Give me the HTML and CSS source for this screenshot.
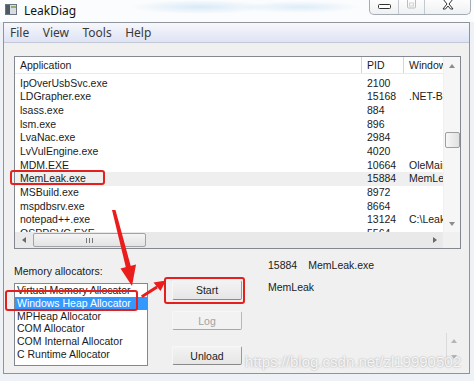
FILE: index.html
```html
<!DOCTYPE html>
<html lang="en">
<head>
    <meta charset="UTF-8">
    <meta name="viewport" content="width=device-width, initial-scale=1.0">
    <title>LeakDiag</title>
    <link rel="stylesheet" href="styles.css">
</head>
<body>
<div class="window">
    <!-- title bar -->
    <div class="titlebar">
        <svg class="app-icon" width="12" height="11" viewBox="0 0 12 11">
            <rect x="0.5" y="0.5" width="11" height="10" fill="#d9dde2" stroke="#6d7680"/>
            <rect x="1" y="1" width="4" height="9" fill="#4c5a66"/>
            <rect x="6" y="2" width="5" height="2" fill="#8fb36a"/>
        </svg>
        <span class="title">LeakDiag</span>
        <div class="controls">
            <div class="ctl ctl-min">
                <svg width="13" height="6" viewBox="0 0 13 6"><rect x="0.5" y="0.5" width="12" height="4" rx="1" fill="#fff" stroke="#333"/></svg>
            </div>
            <div class="ctl ctl-max">
                <svg width="9" height="9" viewBox="0 0 9 9"><rect x="0.5" y="-2" width="8" height="10" rx="1" fill="none" stroke="#b9bec4"/><rect x="2.5" y="3" width="4" height="3" fill="none" stroke="#d0d4d8"/></svg>
            </div>
            <div class="ctl ctl-close">
                <svg width="12" height="10" viewBox="0 0 12 10"><path d="M1 -1 L5 4 L1 9 L3.5 9 L6 6 L8.5 9 L11 9 L7 4 L11 -1" fill="#fff" stroke="#333" stroke-width="1"/></svg>
            </div>
        </div>
    </div>

    <div class="client">
        <!-- menu -->
        <div class="menubar">
            <span>File</span>
            <span>View</span>
            <span>Tools</span>
            <span>Help</span>
        </div>

        <!-- process list -->
        <div class="listview">
            <div class="lv-body">
                <div class="lv-head">
                    <div class="col app">Application</div>
                    <div class="col pid">PID</div>
                    <div class="col win">Window</div>
                </div>
                <div class="lv-rows">
                    <div class="row"><span class="col app">IpOverUsbSvc.exe</span><span class="col pid">2100</span><span class="col win"></span></div>
                    <div class="row"><span class="col app">LDGrapher.exe</span><span class="col pid">15168</span><span class="col win">.NET-BroadcastEventWindow</span></div>
                    <div class="row"><span class="col app">lsass.exe</span><span class="col pid">884</span><span class="col win"></span></div>
                    <div class="row"><span class="col app">lsm.exe</span><span class="col pid">896</span><span class="col win"></span></div>
                    <div class="row"><span class="col app">LvaNac.exe</span><span class="col pid">2984</span><span class="col win"></span></div>
                    <div class="row"><span class="col app">LvVulEngine.exe</span><span class="col pid">4020</span><span class="col win"></span></div>
                    <div class="row"><span class="col app">MDM.EXE</span><span class="col pid">10664</span><span class="col win">OleMainThreadWndName</span></div>
                    <div class="row hover"><span class="col app">MemLeak.exe</span><span class="col pid">15884</span><span class="col win">MemLeak</span></div>
                    <div class="row"><span class="col app">MSBuild.exe</span><span class="col pid">8972</span><span class="col win"></span></div>
                    <div class="row"><span class="col app">mspdbsrv.exe</span><span class="col pid">8664</span><span class="col win"></span></div>
                    <div class="row"><span class="col app">notepad++.exe</span><span class="col pid">13124</span><span class="col win">C:\LeakDiag</span></div>
                    <div class="row"><span class="col app">OSPPSVC.EXE</span><span class="col pid">5564</span><span class="col win"></span></div>
                </div>
            </div>
            <div class="vscroll">
                <div class="sb-btn"><i class="tri up"></i></div>
                <div class="sb-track"><div class="vthumb"></div></div>
                <div class="sb-btn"><i class="tri down"></i></div>
            </div>
            <div class="hscroll">
                <div class="sb-btn"><i class="tri left"></i></div>
                <div class="sb-track"><div class="hthumb"><span class="grip"></span></div></div>
                <div class="sb-btn"><i class="tri right"></i></div>
            </div>
            <div class="corner"></div>
        </div>

        <!-- allocators, buttons, info -->
        <div class="bottom">
            <div class="alloc">
                <div class="label">Memory allocators:</div>
                <div class="listbox">
                    <div class="item">Virtual Memory Allocator</div>
                    <div class="item selected">Windows Heap Allocator</div>
                    <div class="item">MPHeap Allocator</div>
                    <div class="item">COM Allocator</div>
                    <div class="item">COM Internal Allocator</div>
                    <div class="item">C Runtime Allocator</div>
                </div>
            </div>
            <div class="buttons">
                <button class="btn btn-start">Start</button>
                <button class="btn btn-log" disabled>Log</button>
                <button class="btn btn-unload">Unload</button>
            </div>
            <div class="info">
                <div class="info-line"><span class="info-pid">15884</span><span>MemLeak.exe</span></div>
                <div class="info-line second">MemLeak</div>
                <div class="output">
                    <div class="out-scroll">
                        <i class="tri up light"></i>
                        <i class="tri down light"></i>
                    </div>
                </div>
            </div>
        </div>
    </div>

    <!-- red annotations drawn over the screenshot -->
    <div class="mark mark-proc"></div>
    <div class="mark mark-alloc"></div>
    <div class="mark mark-start"></div>
    <svg class="arrows" width="474" height="381" viewBox="0 0 474 381">
        <polygon points="112,210 115.5,210 131,267 126,268" fill="#ea1c1c"/>
        <polygon points="120.5,268.5 136,264.5 132,286" fill="#ea1c1c"/>
        <polygon points="141,295.5 142.5,298 157.5,288.5 156.5,285.5" fill="#ea1c1c"/>
        <polygon points="153.5,282.5 160.5,291 166,280.5" fill="#ea1c1c"/>
    </svg>
    <div class="watermark">https://blog.csdn.net/zl19990502</div>
</div>
</body>
</html>
```

FILE: styles.css
```css
body {
    margin: 0;
    font-family: "Liberation Sans", Arial, sans-serif;
    font-size: 10.5px;
    color: #1b1b1b;
}
.window {
    position: relative;
    width: 474px;
    height: 381px;
    overflow: hidden;
    background: #eef1f5;
}

/* title bar */
.titlebar {
    display: flex;
    align-items: flex-start;
    height: 22px;
    background:
        radial-gradient(ellipse 70px 7px at 200px 7px, rgba(150, 200, 235, 0.35), transparent),
        radial-gradient(ellipse 60px 6px at 300px 7px, rgba(150, 200, 235, 0.3), transparent),
        #fbfcfd;
}
.app-icon {
    margin: 4px 0 0 5px;
}
.title {
    margin-left: 7px;
    font-family: "Noto Sans", sans-serif;
    font-size: 12px;
    line-height: 21px;
    color: #111;
}
.controls {
    display: flex;
    margin-left: auto;
    margin-right: 3px;
    height: 14px;
    border: 1px solid #a4abb3;
    border-top: 0;
    border-radius: 0 0 5px 5px;
    background: linear-gradient(#fdfdfd, #eef0f2);
}
.ctl {
    display: flex;
    align-items: center;
    justify-content: center;
    height: 14px;
}
.ctl-min { width: 28px; border-right: 1px solid #c4c9ce; }
.ctl-max { width: 25px; border-right: 1px solid #c4c9ce; align-items: flex-start; }
.ctl-close { width: 45px; align-items: flex-start; }

/* client */
.client {
    margin: 0 4px 0 3px;
    height: 350px;
    border: 1px solid #8d949c;
    background: #f0f0f0;
}
.menubar {
    display: flex;
    gap: 13.5px;
    height: 19px;
    padding-left: 6px;
    border-bottom: 1px solid #c3c8d6;
    background: linear-gradient(#f7f8fc, #e9ecf8 55%, #dfe3f3);
    font-family: "Noto Sans", sans-serif;
    font-size: 12px;
    line-height: 19px;
    color: #3a3a3a;
}

/* list view */
.listview {
    display: grid;
    grid-template-columns: 428px 17px;
    grid-template-rows: 175px 16px;
    width: 445px;
    margin: 13px 0 0 10px;
    border: 1px solid #828790;
    background: #fff;
}
.lv-body {
    overflow: hidden;
}
.lv-head {
    display: flex;
    height: 16px;
    line-height: 16px;
    border-bottom: 1px solid #eaeaea;
}
.lv-head .col {
    border-right: 1px solid #d5d5d5;
}
.lv-rows {
    padding-top: 2.5px;
}
.row {
    display: flex;
    height: 13.7px;
    line-height: 13.7px;
}
.row.hover {
    background: #efefef;
}
.col {
    flex: none;
    box-sizing: border-box;
    padding-left: 5px;
    white-space: nowrap;
    overflow: hidden;
}
.col.app { width: 347px; }
.col.pid { width: 42px; }
.col.win { width: 80px; }

/* scroll bars */
.vscroll {
    display: flex;
    flex-direction: column;
    background: #f6f6f6;
    border-left: 1px solid #f0f0f0;
}
.vscroll .sb-btn {
    height: 17px;
}
.vscroll .sb-track {
    flex: 1;
}
.vthumb {
    width: 13px;
    height: 14px;
    margin: 58px 0 0 1px;
    border: 1px solid #9e9e9e;
    border-radius: 2px;
    background: linear-gradient(to right, #f7f7f7, #e1e1e1);
}
.hscroll {
    display: flex;
    background: #e9e9e9;
}
.hscroll .sb-btn {
    width: 17px;
}
.hscroll .sb-track {
    flex: 1;
}
.hthumb {
    display: flex;
    align-items: center;
    justify-content: center;
    width: 111px;
    height: 12px;
    margin: 1px 0 0 1px;
    border: 1px solid #a2a2a2;
    border-radius: 2px;
    background: linear-gradient(#f4f4f4, #e3e3e3);
}
.grip {
    width: 5px;
    height: 5px;
    border-left: 1px solid #777;
    border-right: 1px solid #777;
    background: linear-gradient(to right, transparent 2px, #777 2px, #777 3px, transparent 3px);
}
.corner {
    background: #f0f0f0;
}
.sb-btn {
    display: flex;
    align-items: center;
    justify-content: center;
}
.tri {
    display: block;
    width: 0;
    height: 0;
}
.tri.up {
    border-left: 3.5px solid transparent;
    border-right: 3.5px solid transparent;
    border-bottom: 4px solid #8c8c8c;
}
.tri.down {
    border-left: 3.5px solid transparent;
    border-right: 3.5px solid transparent;
    border-top: 4px solid #8c8c8c;
}
.tri.left {
    border-top: 3.5px solid transparent;
    border-bottom: 3.5px solid transparent;
    border-right: 4px solid #6a6a6a;
}
.tri.right {
    border-top: 3.5px solid transparent;
    border-bottom: 3.5px solid transparent;
    border-left: 4px solid #6a6a6a;
}

/* bottom part */
.bottom {
    display: flex;
    height: 117px;
    margin: 0 9px 0 10px;
}
.alloc {
    width: 134px;
}
.label {
    margin-top: 16px;
    line-height: 13px;
}
.listbox {
    height: 81px;
    margin-top: 5px;
    border: 1px solid #828790;
    background: #fff;
    overflow: hidden;
}
.item {
    height: 12.8px;
    line-height: 12.8px;
    padding-left: 2px;
    white-space: nowrap;
}
.item.selected {
    background: #3399ff;
    color: #fff;
}
.buttons {
    display: flex;
    flex-direction: column;
    width: 70px;
    margin-left: 24px;
}
.btn {
    height: 20px;
    padding: 0;
    border: 1px solid;
    border-color: #f7f7f7 #9a9a9a #8a8a8a #f7f7f7;
    border-radius: 2px;
    background: linear-gradient(#f3f3f3, #e6e6e6);
    font-family: "Liberation Sans", Arial, sans-serif;
    font-size: 10.5px;
    color: #1b1b1b;
}
.btn-start { margin-top: 31px; }
.btn-log {
    height: 19px;
    margin-top: 11px;
    border-color: #f7f7f7 #b8b8b8 #a8a8a8 #f7f7f7;
    color: #a3a3a3;
    background: #f2f2f2;
}
.btn-unload { height: 19px; margin-top: 16px; }
.info {
    display: flex;
    flex-direction: column;
    flex: 1;
    margin-left: 26px;
}
.info-line {
    margin-top: 10px;
    line-height: 12px;
}
.info-pid {
    margin-right: 11px;
}
.output {
    display: flex;
    justify-content: flex-end;
    margin-top: auto;
    height: 33px;
}
.out-scroll {
    display: flex;
    flex-direction: column;
    align-items: center;
    justify-content: space-between;
    width: 14px;
    padding: 6px 0 7px;
    box-sizing: border-box;
    border-left: 1px solid #dadada;
}
.tri.light.up { border-bottom-color: #b5b5b5; }
.tri.light.down { border-top-color: #b5b5b5; }

/* annotations */
.mark {
    position: absolute;
    box-sizing: border-box;
    border: 2px solid #e3201e;
    border-radius: 3px;
}
.mark-proc { left: 10px; top: 170px; width: 95px; height: 15px; }
.mark-alloc { left: 5px; top: 290px; width: 133px; height: 21px; }
.mark-start { left: 164px; top: 277px; width: 81px; height: 27px; }
.arrows {
    position: absolute;
    left: 0;
    top: 0;
    pointer-events: none;
}
.watermark {
    position: absolute;
    left: 245px;
    top: 353px;
    font-size: 15px;
    color: rgba(255, 255, 255, 0.85);
    text-shadow: 0 0 2px rgba(0, 0, 0, 0.35);
    white-space: nowrap;
}
```
